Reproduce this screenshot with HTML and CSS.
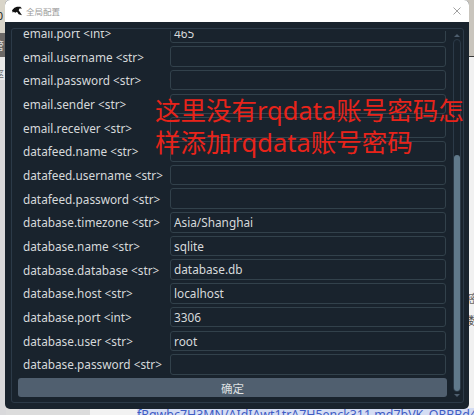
FILE: index.html
```html
<!DOCTYPE html>
<html lang="zh-CN">
<head>
<meta charset="utf-8">
<title>全局配置</title>
<link rel="stylesheet" href="styles.css">
</head>
<body>
<div class="backdrop">
  <span class="peek peek-zero">0</span>
  <span class="peek peek-a">管</span>
  <span class="peek peek-b">率</span>
  <span class="peek peek-c">密</span>
  <span class="peek peek-d">数</span>
  <div class="dialog">
    <header class="titlebar">
      <svg class="logo" viewBox="0 0 14 12" width="12" height="10"><path d="M1 5 L4 2 L7 1 L11 1 L13 3 L10 3 L9 5 L11 8 L13 11 L9 10 L7 7 L5 8 L3 7 L2 8 Z" fill="#111"/></svg>
      <span class="title">全局配置</span>
      <svg class="close" viewBox="0 0 8 8" width="8" height="8"><path d="M0.5 0.5 L7.5 7.5 M7.5 0.5 L0.5 7.5" stroke="#8a8a8a" stroke-width="0.8" fill="none"/></svg>
    </header>
    <main class="content">
      <div class="frame">
        <div class="scrollarea">
          <div class="rows">
            <div class="row"><label>email.port &lt;int&gt;</label><div class="field">465</div></div>
            <div class="row"><label>email.username &lt;str&gt;</label><div class="field"></div></div>
            <div class="row"><label>email.password &lt;str&gt;</label><div class="field"></div></div>
            <div class="row"><label>email.sender &lt;str&gt;</label><div class="field"></div></div>
            <div class="row"><label>email.receiver &lt;str&gt;</label><div class="field"></div></div>
            <div class="row"><label>datafeed.name &lt;str&gt;</label><div class="field"></div></div>
            <div class="row"><label>datafeed.username &lt;str&gt;</label><div class="field"></div></div>
            <div class="row"><label>datafeed.password &lt;str&gt;</label><div class="field"></div></div>
            <div class="row"><label>database.timezone &lt;str&gt;</label><div class="field">Asia/Shanghai</div></div>
            <div class="row"><label>database.name &lt;str&gt;</label><div class="field">sqlite</div></div>
            <div class="row"><label>database.database &lt;str&gt;</label><div class="field">database.db</div></div>
            <div class="row"><label>database.host &lt;str&gt;</label><div class="field">localhost</div></div>
            <div class="row"><label>database.port &lt;int&gt;</label><div class="field">3306</div></div>
            <div class="row"><label>database.user &lt;str&gt;</label><div class="field">root</div></div>
            <div class="row"><label>database.password &lt;str&gt;</label><div class="field"></div></div>
          </div>
          <button class="confirm">确定</button>
        </div>
        <div class="scrollbar">
          <span class="arrow up"></span>
          <div class="track"><div class="thumb"></div></div>
          <span class="arrow down"></span>
        </div>
      </div>
    </main>
  </div>
  <p class="note">这里没有rqdata账号密码怎<br>样添加rqdata账号密码</p>
  <p class="link">fRqwbc7H3MN/AIdIAwt1trA7H5enck311 md7bVK_ORBBd4VoOga1mWzK</p>
</div>
</body>
</html>
```
FILE: styles.css
```css
* { box-sizing: border-box; }
html, body { margin: 0; padding: 0; }
body { width: 474px; height: 415px; overflow: hidden; font-family: "Noto Sans", "Noto Sans CJK SC", sans-serif; }
.backdrop {
  position: relative;
  width: 474px;
  height: 415px;
  overflow: hidden;
  padding: 0 5px 6px 5px;
  background:
    linear-gradient(180deg, #d9d5c9 0, #d9d5c9 33px, #6b6866 33px, #6b6866 57px, #e8e8e8 57px, #e8e8e8 80px, #d9d9db 80px) left top / 6px 100% no-repeat,
    linear-gradient(180deg, #c9c5bd 0, #c9c5bd 56px, #3a3a3a 56px, #3a3a3a 57px, #f1f1f1 57px) right top / 7px 100% no-repeat,
    linear-gradient(90deg, #dcdcdc 0, #dcdcdc 90px, #f2f2f2 90px);
}
.peek {
  position: absolute;
  font-size: 11px;
  line-height: 14px;
  color: #444;
  font-family: "Noto Sans CJK SC", sans-serif;
}
.peek-zero { left: -3px; top: 8px; color: #222; }
.peek-a { left: -7px; top: 38px; color: #ddd; }
.peek-b { left: -7px; top: 67px; color: #666; }
.peek-c { left: 468px; top: 291px; color: #666; }
.peek-d { left: 468px; top: 313px; color: #555; }
.dialog {
  position: relative;
  z-index: 1;
  height: 100%;
  display: flex;
  flex-direction: column;
  border-radius: 5px;
  overflow: hidden;
  background: #19232d;
}
.titlebar {
  flex: none;
  height: 22px;
  background: #fff;
  display: flex;
  align-items: center;
  padding: 0 8px 0 6px;
}
.logo { flex: none; }
.title { margin-left: 3px; font-size: 8.5px; color: #9a9a9a; font-family: "Noto Sans CJK SC", sans-serif; }
.close { margin-left: auto; }
.content { flex: 1; min-height: 0; padding: 6px 5px 6px 6px; }
.frame {
  height: 100%;
  border: 1px solid #2c3a48;
  border-radius: 3px;
  display: flex;
  padding-right: 2px;
}
.scrollarea { flex: 1; min-width: 0; display: flex; flex-direction: column; overflow: hidden; padding: 2px 6px 0 6px; }
.rows { flex: 1; min-height: 0; overflow: hidden; }
.rows .row:first-child { margin-top: -10px; }
.row { display: flex; align-items: center; height: 23.7px; }
.row label { width: 152px; flex: none; font-size: 11.8px; color: #d6d9db; padding-left: 5px; white-space: nowrap; }
.field {
  flex: 1;
  height: 20.5px;
  border: 1px solid #32414b;
  border-radius: 3px;
  background: #19232d;
  color: #d6d9db;
  font-size: 11.8px;
  line-height: 18px;
  padding-left: 3px;
}
.confirm {
  flex: none;
  height: 19px;
  margin: 3px -1px 5px 0;
  border: none;
  border-radius: 3px;
  background: #505f6f;
  color: #dfe1e2;
  font-size: 11.5px;
  font-family: "Noto Sans CJK SC", sans-serif;
  padding: 0;
}
.scrollbar { flex: none; width: 9px; display: flex; flex-direction: column; align-items: center; padding: 5px 0 5px; gap: 2px; }
.arrow { flex: none; width: 0; height: 0; border-left: 3px solid transparent; border-right: 3px solid transparent; }
.arrow.up { border-bottom: 3px solid #4d5d6d; }
.arrow.down { border-top: 3px solid #4d5d6d; }
.track { flex: 1; width: 8px; border: 1px solid #2c3a48; border-radius: 4px; display: flex; flex-direction: column; justify-content: flex-end; }
.thumb { height: 236px; background: #60798b; border-radius: 3px; }
.note {
  position: absolute;
  z-index: 2;
  left: 155px;
  top: 94px;
  margin: 0;
  font-size: 25.5px;
  line-height: 32px;
  color: #e8231a;
  white-space: nowrap;
  font-family: "Noto Sans", "Noto Sans CJK SC", sans-serif;
}
.link {
  position: absolute;
  left: 137px;
  top: 408px;
  width: 337px;
  overflow: hidden;
  margin: 0;
  font-size: 12.4px;
  line-height: 14px;
  color: #3f5cc4;
  background: #d5ddf3;
  white-space: nowrap;
}
```
